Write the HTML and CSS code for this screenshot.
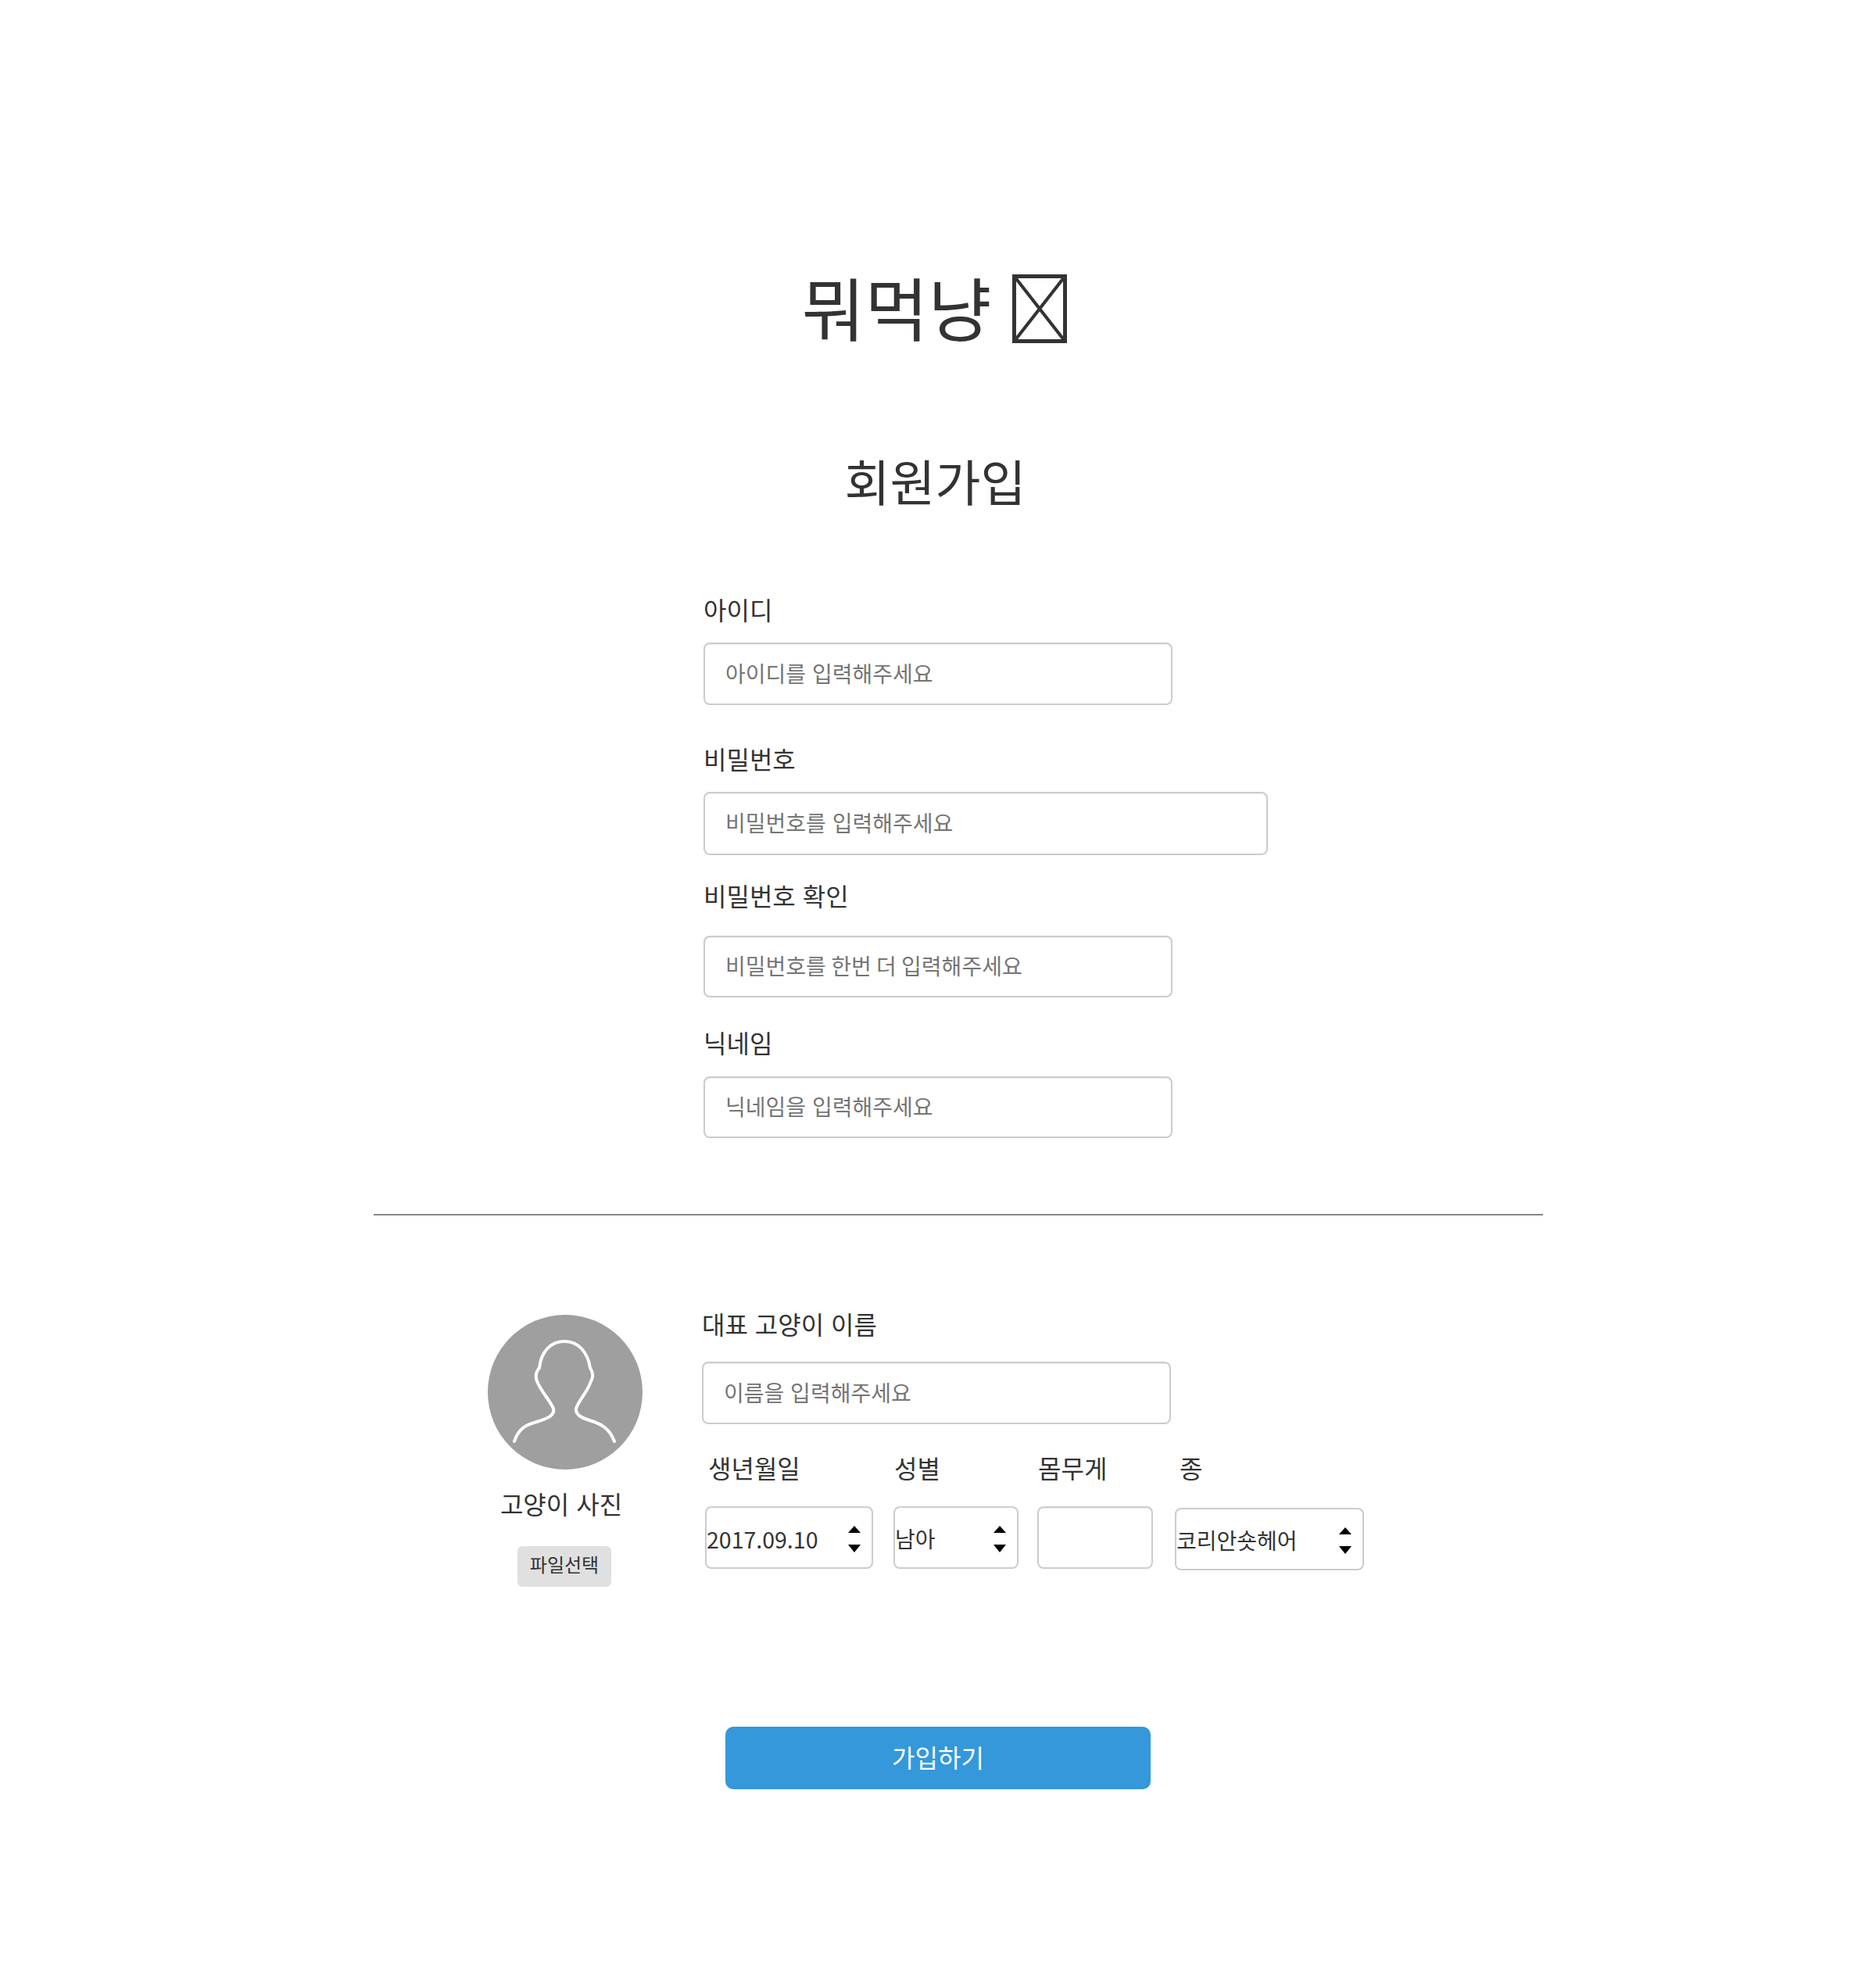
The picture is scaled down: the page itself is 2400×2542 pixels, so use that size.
FILE: index.html
```html
<!DOCTYPE html>
<html lang="ko">
<head>
<meta charset="utf-8">
<title>뭐먹냥 회원가입</title>
<link rel="stylesheet" href="styles.css">
</head>
<body>
<main class="page">
  <header class="brand">
    <h1 class="logo-text">뭐먹냥</h1>
    <svg class="logo-img" viewBox="0 0 70 88" aria-hidden="true"><rect x="2.5" y="2.5" width="65" height="83" fill="none" stroke="#333" stroke-width="5"/><path d="M3 3 67 85M67 3 3 85" stroke="#333" stroke-width="4.2" fill="none"/></svg>
  </header>
  <h2 class="page-title">회원가입</h2>

  <form class="form">
    <section class="account">
      <div class="field field-id"><label class="label">아이디</label><input class="input" placeholder="아이디를 입력해주세요"></div>
      <div class="field field-pw"><label class="label">비밀번호</label><input class="input input-wide" placeholder="비밀번호를 입력해주세요"></div>
      <div class="field field-pw2"><label class="label">비밀번호 확인</label><input class="input" placeholder="비밀번호를 한번 더 입력해주세요"></div>
      <div class="field field-nick"><label class="label">닉네임</label><input class="input" placeholder="닉네임을 입력해주세요"></div>
    </section>

    <hr class="divider">

    <section class="cat">
      <div class="photo">
        <svg class="avatar" viewBox="0 0 198 198" aria-hidden="true"><circle cx="99" cy="99" r="99" fill="#9f9f9f"/><path d="M34 162C40 143 52 140 66 136C78 132 86 128 84 120C80 110 68 98 63 85C61 80 61 74 66 68C68 48 80 34 98 34C116 34 128 48 131 68C135 74 135 80 132 85C128 98 116 110 113 120C112 128 120 132 133 136C146 140 156 146 162 162" fill="none" stroke="#fff" stroke-width="4" stroke-linecap="round" stroke-linejoin="round"/></svg>
        <div class="photo-label">고양이 사진</div>
        <button type="button" class="file-btn">파일선택</button>
      </div>
      <div class="cat-info">
        <div class="field field-cat"><label class="label">대표 고양이 이름</label><input class="input" placeholder="이름을 입력해주세요"></div>
        <div class="details">
          <div class="cell cell-birth">
            <label class="label">생년월일</label>
            <div class="select-wrap">
              <select class="select"><option>2017.09.10</option></select>
              <svg class="arrows" viewBox="0 0 16 34" aria-hidden="true"><path d="M8 0 16 9H0ZM0 24H16L8 34Z" fill="#000"/></svg>
            </div>
          </div>
          <div class="cell cell-gender">
            <label class="label">성별</label>
            <div class="select-wrap">
              <select class="select"><option>남아</option></select>
              <svg class="arrows" viewBox="0 0 16 34" aria-hidden="true"><path d="M8 0 16 9H0ZM0 24H16L8 34Z" fill="#000"/></svg>
            </div>
          </div>
          <div class="cell cell-weight">
            <label class="label">몸무게</label>
            <input class="input input-small">
          </div>
          <div class="cell cell-breed">
            <label class="label">종</label>
            <div class="select-wrap">
              <select class="select"><option>코리안숏헤어</option></select>
              <svg class="arrows" viewBox="0 0 16 34" aria-hidden="true"><path d="M8 0 16 9H0ZM0 24H16L8 34Z" fill="#000"/></svg>
            </div>
          </div>
        </div>
      </div>
    </section>

    <div class="actions"><button type="button" class="submit">가입하기</button></div>
  </form>
</main>
</body>
</html>
```
FILE: styles.css
```css
* { box-sizing: border-box; }
html, body { margin: 0; background: #fff; }
body {
  font-family: "Noto Sans CJK KR", "Noto Sans", sans-serif;
  color: #333;
}
.page { width: 2400px; height: 2542px; padding-top: 336px; }
.brand {
  display: flex; justify-content: center; align-items: flex-start;
  gap: 27px; height: 110px; padding-right: 9px;
}
.logo-text { margin: 0; font-size: 88px; line-height: 110px; font-weight: 400; color: #333; }
.logo-img { width: 70px; height: 88px; margin-top: 15px; }
.page-title {
  margin: 124px 0 0; height: 90px; padding-right: 7px;
  font-size: 63px; line-height: 88px; font-weight: 400; text-align: center; color: #333;
}
.form { display: block; }
.account { padding-left: 900px; margin-top: 98px; }
.field { display: flex; flex-direction: column; align-items: flex-start; }
.label { display: block; font-size: 32px; line-height: 42px; color: #333; }
.field .label { margin-bottom: 22px; }
.field-pw { margin-top: 47px; }
.field-pw2 { margin-top: 30px; }
.field-pw2 .label { margin-bottom: 31px; }
.field-nick { margin-top: 36px; }
.field-nick .label { margin-bottom: 23px; }
.input {
  display: block; width: 600px; height: 80px; padding: 0 26px 3px;
  font: inherit; font-size: 28px; color: #333;
  border: 2px solid #ccc; border-radius: 8px; background: #fff;
  box-shadow: inset 0 1px 1px rgba(0,0,0,.075);
  outline: none;
}
.input::placeholder { color: #757575; opacity: 1; }
.input-wide { width: 722px; height: 81px; }
.field-pw2 .input { word-spacing: -1.5px; }
.field-pw2 .input, .field-nick .input { height: 79px; }
.divider { margin: 97px 0 0 478px; width: 1496px; height: 2px; border: 0; background: #888; }
.cat { display: flex; align-items: flex-start; margin-top: 117px; padding-left: 624px; }
.photo { width: 198px; padding-top: 10px; display: flex; flex-direction: column; align-items: center; }
.avatar { display: block; width: 198px; height: 198px; }
.photo-label { margin-top: 22px; margin-bottom: 4px; font-size: 32px; line-height: 42px; padding-right: 10px; white-space: nowrap; }
.file-btn {
  margin-top: 30px; margin-right: 2px; width: 120px; height: 52px; padding: 0 0 7px;
  font: inherit; font-size: 24px; color: #333;
  background: #e0e0e0; border: 0; border-radius: 6px;
}
.cat-info { margin-left: 76px; }
.field-cat .label { margin-bottom: 28px; }
.details { display: flex; align-items: flex-start; margin-top: 34px; }
.cell { display: flex; flex-direction: column; align-items: flex-start; }
.cell .label { margin-bottom: 29px; }
.cell-birth { margin-left: 4px; width: 241px; }
.cell-birth .label { margin-left: 4px; }
.cell-gender { width: 184px; }
.cell-gender .label { margin-left: 1px; }
.cell-weight { width: 176px; }
.cell-weight .label { margin-left: 1px; }
.cell-breed .label { margin-left: 6px; margin-bottom: 31px; }
.select-wrap { position: relative; }
.select {
  display: block; height: 80px; padding: 2px 0 0;
  font: inherit; font-size: 28px; color: #333;
  border: 2px solid #ccc; border-radius: 8px; background: #fff;
  appearance: none; -webkit-appearance: none;
  outline: none;
}
.cell-birth .select { width: 215px; font-size: 28.5px; }
.cell-gender .select { width: 160px; }
.cell-breed .select { width: 242px; }
.input-small { width: 148px; padding: 0; }
.arrows { position: absolute; top: 25px; right: 16px; width: 16px; height: 34px; }
.actions { display: flex; justify-content: center; margin-top: 179px; }
.submit {
  width: 544px; height: 80px; padding: 0 0 5px;
  font: inherit; font-size: 32px; color: #fff;
  background: #3498db; border: 0; border-radius: 10px;
}
```
